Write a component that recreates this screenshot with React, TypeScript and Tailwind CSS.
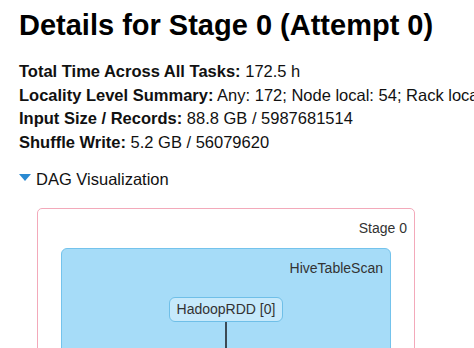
export default function App() {
  const rows = [
    { label: "Total Time Across All Tasks:", value: "172.5 h" },
    {
      label: "Locality Level Summary:",
      value: "Any: 172; Node local: 54; Rack local: 12",
    },
    { label: "Input Size / Records:", value: "88.8 GB / 5987681514" },
    { label: "Shuffle Write:", value: "5.2 GB / 56079620" },
  ];

  return (
    <div className="h-[348px] w-[474px] overflow-hidden bg-white pl-[19px] font-['Liberation_Sans',Arial,sans-serif] text-[#111]">
      {/* Title */}
      <h1 className="pt-[8px] text-[29px] font-bold leading-[34px] whitespace-nowrap text-black">
        Details for Stage 0 (Attempt 0)
      </h1>

      {/* Summary */}
      <ul className="mt-[18px] text-[16.5px] leading-[23.7px] whitespace-nowrap">
        {rows.map((r) => (
          <li key={r.label}>
            <span className="font-bold">{r.label}</span> {r.value}
          </li>
        ))}
      </ul>

      {/* DAG toggle */}
      <div className="mt-[12px] flex items-center gap-[5px] text-[16.5px] leading-[24px]">
        <svg width="12" height="7" viewBox="0 0 12 7" className="mt-[-2px]">
          <path d="M0 0 H12 L6 7 Z" fill="#2a8ad2" />
        </svg>
        <span>DAG Visualization</span>
      </div>

      {/* Stage cluster */}
      <div className="ml-[18px] mt-[17px] w-[378px] rounded-[5px] border border-[#f3a9ba] bg-white px-[23px] pt-[10px]">
        <div className="mr-[-16px] text-right text-[14px] leading-[18px] text-[#333]">
          Stage 0
        </div>
        <div className="mt-[11px] h-[200px] rounded-[6px] border border-[#74c3ec] bg-[#a6dcf8] pt-[10px]">
          <div className="pr-[7px] text-right text-[14px] leading-[18px] text-[#333]">
            HiveTableScan
          </div>
          <div className="mx-auto mt-[20px] w-fit rounded-[6px] border border-[#6fbfe8] bg-[#c6e9fb] px-[7px] py-[2px] text-[14px] leading-[19px] text-[#333]">
            HadoopRDD [0]
          </div>
          <div className="mx-auto h-[40px] w-[2px] bg-[#3b4a55]" />
        </div>
      </div>
    </div>
  );
}
